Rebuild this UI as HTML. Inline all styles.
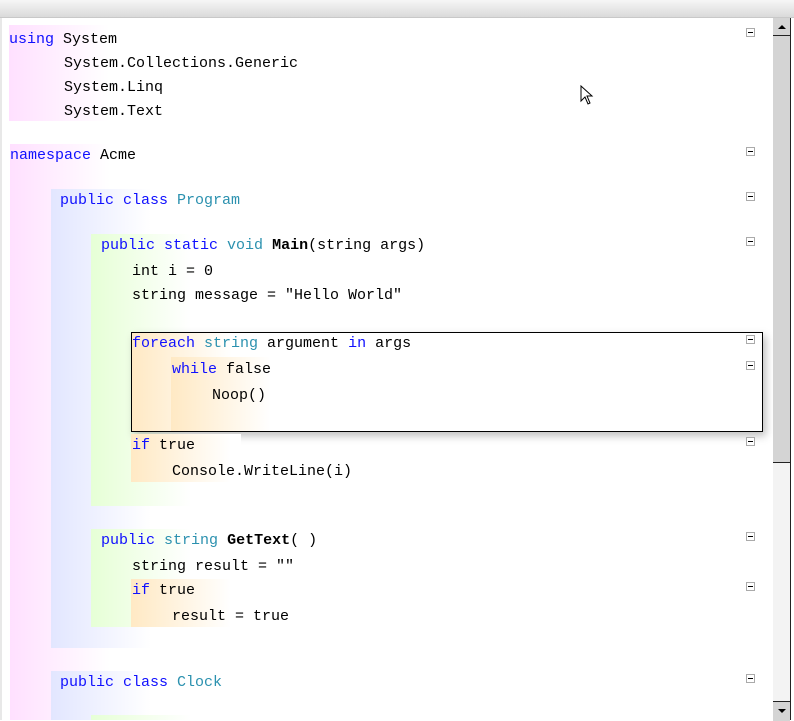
<!DOCTYPE html>
<html><head><style>
body{margin:0;width:794px;height:720px;overflow:hidden;background:#fff;position:relative;font-family:"Liberation Mono",monospace;font-size:15px;}
.a{position:absolute}
.t{position:absolute;white-space:pre;line-height:18px;color:#000;margin-top:2px}
.k{color:#1010ff}.ty{color:#2b91af}.b{font-weight:bold}
.pk{background:linear-gradient(to right,#ffe0ff,#fff 100px)}
.bl{background:linear-gradient(to right,#e2e6ff,#fff 100px)}
.gr{background:linear-gradient(to right,#e6ffd6,#fff 100px)}
.or{background:linear-gradient(to right,#ffe9c4,#fff 100px)}
.f{position:absolute;left:746px;width:7px;height:7px;border:1px solid #aaa;background:#fff}
.f:after{content:"";position:absolute;left:1px;top:3px;width:5px;height:1px;background:#000}
</style></head><body>
<div class="a" style="left:0;top:0;width:794px;height:17px;background:linear-gradient(#f6f6f6,#dadada);border-bottom:1px solid #c8c8c8"></div>
<div class="a" style="left:0;top:18px;width:2px;height:702px;background:#e8e8e8"></div>

<div class="a pk" style="left:9px;top:25px;width:110px;height:96px"></div>
<div class="a pk" style="left:10px;top:144px;width:110px;height:576px"></div>
<div class="a bl" style="left:51px;top:189px;width:110px;height:459px"></div>
<div class="a gr" style="left:91px;top:234px;width:110px;height:272px"></div>
<div class="a" style="left:131px;top:332px;width:630px;height:98px;border:1px solid #000;background:#fff;box-shadow:3px 4px 8px rgba(0,0,0,.25)"></div>
<div class="a or" style="left:132px;top:333px;width:110px;height:98px"></div>
<div class="a or" style="left:171px;top:357px;width:110px;height:74px"></div>
<div class="a or" style="left:131px;top:434px;width:110px;height:48px"></div>
<div class="a gr" style="left:91px;top:529px;width:110px;height:98px"></div>
<div class="a or" style="left:131px;top:579px;width:110px;height:48px"></div>
<div class="a bl" style="left:51px;top:671px;width:110px;height:49px"></div>
<div class="a gr" style="left:91px;top:715px;width:110px;height:5px"></div>

<div class="t" style="left:9px;top:29px"><span class="k">using</span> System</div>
<div class="t" style="left:64px;top:53px">System.Collections.Generic</div>
<div class="t" style="left:64px;top:77px">System.Linq</div>
<div class="t" style="left:64px;top:101px">System.Text</div>
<div class="t" style="left:10px;top:145px"><span class="k">namespace</span> Acme</div>
<div class="t" style="left:60px;top:190px"><span class="k">public class</span> <span class="ty">Program</span></div>
<div class="t" style="left:101px;top:235px"><span class="k">public static</span> <span class="ty">void</span> <span class="b">Main</span>(string args)</div>
<div class="t" style="left:132px;top:261px">int i = 0</div>
<div class="t" style="left:132px;top:285px">string message = "Hello World"</div>
<div class="t" style="left:132px;top:333px"><span class="k">foreach</span> <span class="ty">string</span> argument <span class="k">in</span> args</div>
<div class="t" style="left:172px;top:359px"><span class="k">while</span> false</div>
<div class="t" style="left:212px;top:385px">Noop()</div>
<div class="t" style="left:132px;top:435px"><span class="k">if</span> true</div>
<div class="t" style="left:172px;top:461px">Console.WriteLine(i)</div>
<div class="t" style="left:101px;top:530px"><span class="k">public</span> <span class="ty">string</span> <span class="b">GetText</span>( )</div>
<div class="t" style="left:132px;top:556px">string result = ""</div>
<div class="t" style="left:132px;top:580px"><span class="k">if</span> true</div>
<div class="t" style="left:172px;top:606px">result = true</div>
<div class="t" style="left:60px;top:672px"><span class="k">public class</span> <span class="ty">Clock</span></div>

<div class="f" style="top:28px"></div><div class="f" style="top:147px"></div><div class="f" style="top:192px"></div><div class="f" style="top:237px"></div><div class="f" style="top:335px"></div><div class="f" style="top:361px"></div><div class="f" style="top:437px"></div><div class="f" style="top:532px"></div><div class="f" style="top:582px"></div><div class="f" style="top:674px"></div>

<div class="a" style="left:773px;top:18px;width:17px;height:702px;background:#f3f3f3"></div>
<div class="a" style="left:773px;top:36px;width:17px;height:426px;background:#d4d4d4;border-bottom:1px solid #222"></div>
<div class="a" style="left:790px;top:18px;width:1px;height:702px;background:#222"></div>
<div class="a" style="left:773px;top:18px;width:17px;height:17px;background:#d4d4d4;border-bottom:1px solid #222"></div>
<div class="a" style="left:778px;top:25px;width:0;height:0;border-left:4px solid transparent;border-right:4px solid transparent;border-bottom:4px solid #000"></div>
<div class="a" style="left:773px;top:701px;width:17px;height:19px;background:#d4d4d4;border-top:1px solid #222"></div>
<div class="a" style="left:778px;top:709px;width:0;height:0;border-left:4px solid transparent;border-right:4px solid transparent;border-top:4px solid #000"></div>

<svg class="a" style="left:580px;top:85px" width="14" height="22"><path d="M1 1 L1 16 L5 12 L8 19 L10 18 L7 11 L12 11 Z" fill="#fff" stroke="#000" stroke-width="1"/></svg>
</body></html>
